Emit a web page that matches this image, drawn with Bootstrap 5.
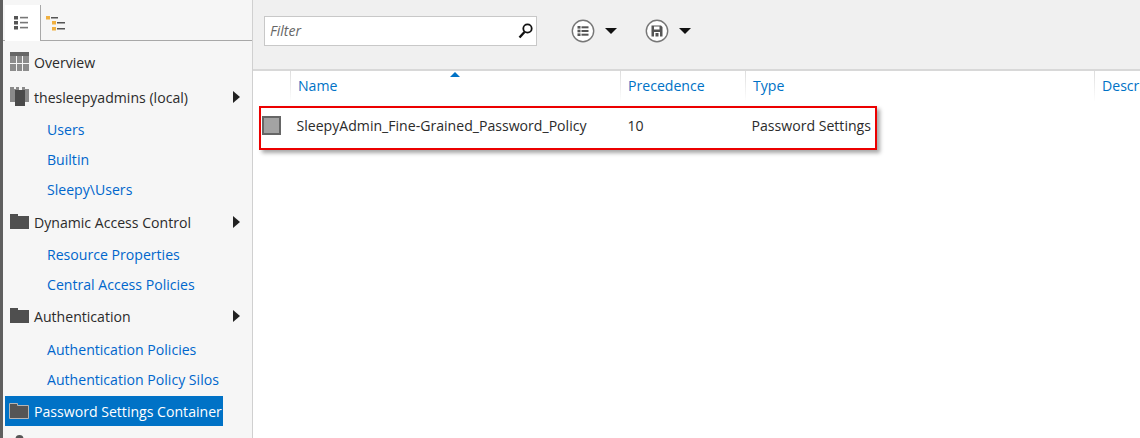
<!DOCTYPE html>
<html lang="en">
<head>
    <meta charset="UTF-8">
    <title>Password Settings Container</title>
    <link href="https://cdn.jsdelivr.net/npm/bootstrap@5.3.0/dist/css/bootstrap.min.css" rel="stylesheet">
    <style>
        body { font-family: "Open Sans", "Noto Sans", sans-serif; font-size: 14.1px; color: #2b2b2b; background: #fff; overflow: hidden; }
        .adac-shell { width: 1140px; height: 438px; overflow: hidden; }
        .adac-side { width: 253px; height: 438px; background: #f6f6f6; border-right: 1px solid #d0d0d0; border-left: 3px solid #5f5f5f; overflow: hidden; flex: none; }
        .adac-tabs { height: 41px; padding-left: 2px; border-bottom: 1px solid #a8a8a8; }
        .adac-tab { height: 36px; margin-top: 5px; width: 36px; padding-left: 9px; background: #fff; border-right: 1px solid #a8a8a8; }
        .adac-tab-off { height: 36px; margin-top: 5px; padding-left: 5px; }
        .adac-item { height: 30px; padding-left: 31px; line-height: 32px; white-space: nowrap; position: relative; }
        .adac-item svg { position: absolute; left: 7px; top: 7px; }
        .adac-item .adac-ico-over { top: 5px; }
        .adac-item .adac-ico-dom { top: 4px; }
        .adac-g2 { margin-top: 2px; }
        .adac-g3 { margin-top: 3px; }
        .adac-g5 { margin-top: 5px; }
        .adac-g6 { margin-top: 6px; }
        .adac-link { color: #0066cc; padding-left: 44px; }
        .adac-arrow { position: absolute; left: 230px; top: 9px; width: 0; height: 0; border-left: 7px solid #222; border-top: 6px solid transparent; border-bottom: 6px solid transparent; }
        .adac-sel { background: #0072c6; color: #fff; width: 218px; margin-left: 2px; padding-left: 29px; overflow: hidden; }
        .adac-sel svg { left: 4px; }
        .adac-toolbar { height: 71px; background: #f0f0f0; border-bottom: 2px solid #d8d8d8; padding: 16px 0 0 11px; }
        .adac-filter { width: 273px; height: 30px; background: #fff; border: 1px solid #c8c8c8; padding-left: 5px; padding-right: 3px; }
        .adac-filter span { font-style: italic; color: #666; }
        .adac-tool { height: 30px; gap: 10px; }
        .adac-tool-a { margin-left: 34px; }
        .adac-tool-b { margin-left: 28px; }
        .adac-caret { width: 0; height: 0; border-top: 6px solid #111; border-left: 6.5px solid transparent; border-right: 6.5px solid transparent; }
        .adac-heads { height: 30px; position: relative; color: #0072c6; line-height: 30px; }
        .adac-col { position: absolute; top: 0; height: 30px; padding-left: 7px; border-left: 1px solid #e4e4e4; border-image: linear-gradient(#dcdcdc, #fff) 1; white-space: nowrap; }
        .adac-col-name { left: 37px; }
        .adac-col-prec { left: 367px; }
        .adac-col-type { left: 492px; }
        .adac-col-desc { left: 841px; }
        .adac-sort { position: absolute; left: 197px; top: 1px; width: 0; height: 0; border-bottom: 5px solid #0072c6; border-left: 5px solid transparent; border-right: 5px solid transparent; }
        .adac-row { width: 618px; height: 44px; margin: 5px 0 0 6px; padding-bottom: 5px; border: 2.5px solid #ec0000; box-shadow: 3px 3px 4px rgba(0,0,0,.35); }
        .adac-check { width: 19px; height: 19px; background: #a3a3a3; border: 2px solid #666; margin-left: .5px; flex: none; }
        .adac-name { width: 347px; padding-left: 16px; flex: none; white-space: nowrap; }
        .adac-prec { width: 124px; flex: none; }
        .adac-type { white-space: nowrap; }
    </style>
</head>
<body>
<div class="adac-shell d-flex">
    <div class="adac-side">
        <div class="adac-tabs d-flex">
            <div class="adac-tab d-flex align-items-center">
                <svg width="14" height="14" viewBox="0 0 14 14"><g fill="#555"><rect x="0" y="0" width="4" height="3.5"/><rect x="0" y="5" width="4" height="3.5"/><rect x="0" y="10" width="4" height="3.5"/><rect x="6" y=".8" width="8" height="1.6" fill="#777"/><rect x="6" y="5.8" width="8" height="1.6" fill="#777"/><rect x="6" y="10.8" width="8" height="1.6" fill="#777"/></g></svg>
            </div>
            <div class="adac-tab-off d-flex align-items-center">
                <svg width="19" height="15" viewBox="0 0 19 15"><g fill="#f0b040"><rect x="0" y="0" width="4" height="3.5"/><rect x="6" y="5" width="4" height="3.5"/><rect x="6" y="11" width="4" height="3.5"/></g><g fill="#555"><rect x="5" y="1" width="7" height="1.5"/><rect x="11" y="6" width="8" height="1.5"/><rect x="11" y="12" width="8" height="1.5"/></g></svg>
            </div>
        </div>
        <div class="adac-item adac-g6">
            <svg class="adac-ico-over" width="19" height="19" viewBox="0 0 19 19"><path fill="#666" d="M0 0h19v4H0z"/><path fill="#8c8c8c" d="M0 4h6v7H0zM7 4h5v7H7zM13 4h6v7h-6zM0 12h6v7H0zM7 12h5v7H7zM13 12h6v7h-6z"/></svg>
            Overview
        </div>
        <div class="adac-item adac-g5">
            <svg class="adac-ico-dom" width="19" height="20" viewBox="0 0 19 20"><path fill="#8a8a8a" d="M0 1h4v2h2V1h3v3H5v12H0zM12 1h3v2h4v13h-4V4h-3z"/><path fill="#4a4a4a" d="M5 4h10v16H5z"/></svg>
            thesleepyadmins (local)
            <span class="adac-arrow"></span>
        </div>
        <div class="adac-item adac-link adac-g2">Users</div>
        <div class="adac-item adac-link">Builtin</div>
        <div class="adac-item adac-link">Sleepy\Users</div>
        <div class="adac-item adac-g3">
            <svg width="19" height="15" viewBox="0 0 19 15"><path fill="#4f4f4f" d="M0 0h8v2h11v13H0z"/></svg>
            Dynamic Access Control
            <span class="adac-arrow"></span>
        </div>
        <div class="adac-item adac-link adac-g2">Resource Properties</div>
        <div class="adac-item adac-link">Central Access Policies</div>
        <div class="adac-item adac-g2">
            <svg width="19" height="15" viewBox="0 0 19 15"><path fill="#4f4f4f" d="M0 0h8v2h11v13H0z"/></svg>
            Authentication
            <span class="adac-arrow"></span>
        </div>
        <div class="adac-item adac-link adac-g3">Authentication Policies</div>
        <div class="adac-item adac-link">Authentication Policy Silos</div>
        <div class="adac-item adac-sel adac-g2">
            <svg width="20" height="16" viewBox="0 0 20 16"><path fill="#555" stroke="#b5b5b5" d="M.5.5h8v2h11v13H.5z"/></svg>
            Password Settings Container
        </div>
        <div class="adac-item adac-g2">
            <svg width="19" height="15" viewBox="0 0 19 15"><circle cx="9.5" cy="4" r="4" fill="#555"/></svg>
        </div>
    </div>
    <div class="flex-grow-1">
        <div class="adac-toolbar d-flex align-items-start">
            <div class="adac-filter d-flex align-items-center justify-content-between">
                <span>Filter</span>
                <svg width="15" height="16" viewBox="0 0 15 16"><circle cx="9.5" cy="5.5" r="4.2" fill="none" stroke="#111" stroke-width="1.8"/><path d="M6.5 9 1.5 14.5" stroke="#111" stroke-width="2.4"/></svg>
            </div>
            <div class="adac-tool adac-tool-a d-flex align-items-center">
                <svg width="24" height="24" viewBox="0 0 24 24"><circle cx="12" cy="12" r="10.7" fill="#fff" stroke="#777" stroke-width="1.4"/><g fill="#555"><rect x="6.5" y="7" width="3" height="2.6"/><rect x="6.5" y="10.7" width="3" height="2.6"/><rect x="6.5" y="14.4" width="3" height="2.6"/><rect x="10.5" y="7.3" width="7" height="2"/><rect x="10.5" y="11" width="7" height="2"/><rect x="10.5" y="14.7" width="7" height="2"/></g></svg>
                <span class="adac-caret"></span>
            </div>
            <div class="adac-tool adac-tool-b d-flex align-items-center">
                <svg width="24" height="24" viewBox="0 0 24 24"><circle cx="12" cy="12" r="10.7" fill="#fff" stroke="#777" stroke-width="1.4"/><path fill="#555" fill-rule="evenodd" d="M6.5 6.5h9.5l1.5 1.5v9.5h-2.5v-4.5h-6v4.5H6.5zM9 7.5v3h5.5v-3zM10.5 14h3v3.5h-3z"/></svg>
                <span class="adac-caret"></span>
            </div>
        </div>
        <div class="adac-heads">
            <span class="adac-col adac-col-name">Name</span>
            <span class="adac-sort"></span>
            <span class="adac-col adac-col-prec">Precedence</span>
            <span class="adac-col adac-col-type">Type</span>
            <span class="adac-col adac-col-desc">Description</span>
        </div>
        <div class="adac-row d-flex align-items-center">
            <span class="adac-check"></span>
            <span class="adac-name">SleepyAdmin_Fine-Grained_Password_Policy</span>
            <span class="adac-prec">10</span>
            <span class="adac-type">Password Settings</span>
        </div>
    </div>
</div>
<script src="https://cdn.jsdelivr.net/npm/bootstrap@5.3.0/dist/js/bootstrap.bundle.min.js"></script>
</body>
</html>
